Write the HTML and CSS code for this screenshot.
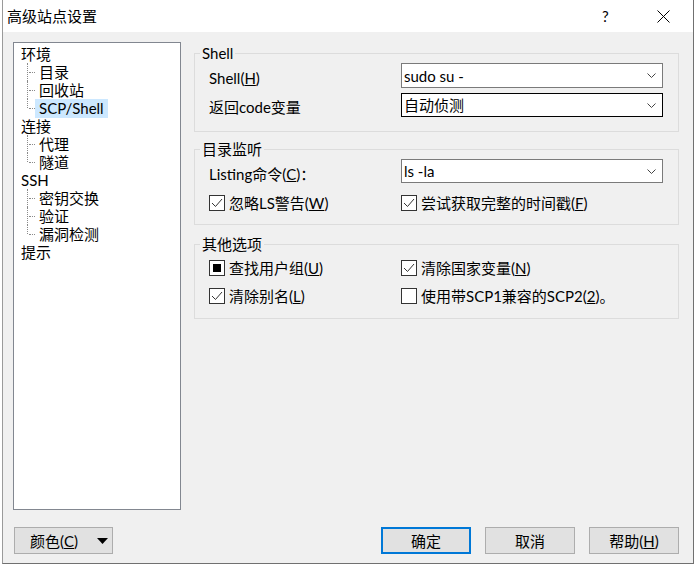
FILE: index.html
```html
<!DOCTYPE html>
<html lang="zh-CN">
<head>
<meta charset="utf-8">
<title>高级站点设置</title>
<link rel="stylesheet" href="styles.css">
</head>
<body>
<div class="window">
  <div class="titlebar">
    <span class="title">高级站点设置</span>
    <span class="help">?</span>
    <span class="close"><svg width="13" height="13" viewBox="0 0 13 13"><path d="M0.5 0.5 L12.5 12.5 M12.5 0.5 L0.5 12.5" stroke="#000" stroke-width="1" fill="none"/></svg></span>
  </div>
  <div class="client">
    <div class="main">
      <ul class="tree">
        <li><span class="label">环境</span>
          <ul class="children">
            <li><span class="label">目录</span></li>
            <li><span class="label">回收站</span></li>
            <li><span class="label selected">SCP/Shell</span></li>
          </ul>
        </li>
        <li><span class="label">连接</span>
          <ul class="children">
            <li><span class="label">代理</span></li>
            <li><span class="label">隧道</span></li>
          </ul>
        </li>
        <li><span class="label">SSH</span>
          <ul class="children">
            <li><span class="label">密钥交换</span></li>
            <li><span class="label">验证</span></li>
            <li><span class="label">漏洞检测</span></li>
          </ul>
        </li>
        <li><span class="label">提示</span></li>
      </ul>
      <div class="panel">
        <fieldset class="group g1">
          <legend>Shell</legend>
          <div class="row r1">
            <span class="lbl">Shell(<u>H</u>)</span>
            <div class="combo"><span class="val">sudo su -</span><svg class="chev" width="9" height="5" viewBox="0 0 9 5"><path d="M0.5 0.5 L4.5 4.5 L8.5 0.5" stroke="#444" fill="none"/></svg></div>
          </div>
          <div class="row r2">
            <span class="lbl">返回code变量</span>
            <div class="combo focus"><span class="val">自动侦测</span><svg class="chev" width="9" height="5" viewBox="0 0 9 5"><path d="M0.5 0.5 L4.5 4.5 L8.5 0.5" stroke="#444" fill="none"/></svg></div>
          </div>
        </fieldset>
        <fieldset class="group g2">
          <legend>目录监听</legend>
          <div class="row r3">
            <span class="lbl">Listing命令(<u>C</u>)：</span>
            <div class="combo"><span class="val">ls -la</span><svg class="chev" width="9" height="5" viewBox="0 0 9 5"><path d="M0.5 0.5 L4.5 4.5 L8.5 0.5" stroke="#444" fill="none"/></svg></div>
          </div>
          <div class="cbrow first">
            <div class="cb"><span class="box"><svg width="14" height="14" viewBox="0 0 14 14"><path d="M2 7 L5.5 10.5 L12 3" stroke="#333" fill="none"/></svg></span><span>忽略LS警告(<u>W</u>)</span></div>
            <div class="cb"><span class="box"><svg width="14" height="14" viewBox="0 0 14 14"><path d="M2 7 L5.5 10.5 L12 3" stroke="#333" fill="none"/></svg></span><span>尝试获取完整的时间戳(<u>F</u>)</span></div>
          </div>
        </fieldset>
        <fieldset class="group g3">
          <legend>其他选项</legend>
          <div class="cbrow first">
            <div class="cb"><span class="box"><span class="indet"></span></span><span>查找用户组(<u>U</u>)</span></div>
            <div class="cb"><span class="box"><svg width="14" height="14" viewBox="0 0 14 14"><path d="M2 7 L5.5 10.5 L12 3" stroke="#333" fill="none"/></svg></span><span>清除国家变量(<u>N</u>)</span></div>
          </div>
          <div class="cbrow second">
            <div class="cb"><span class="box"><svg width="14" height="14" viewBox="0 0 14 14"><path d="M2 7 L5.5 10.5 L12 3" stroke="#333" fill="none"/></svg></span><span>清除别名(<u>L</u>)</span></div>
            <div class="cb"><span class="box"></span><span>使用带SCP1兼容的SCP2(<u>2</u>)。</span></div>
          </div>
        </fieldset>
      </div>
    </div>
    <div class="buttons">
      <button class="btn color"><span>颜色(<u>C</u>)</span><svg width="11" height="6" viewBox="0 0 11 6"><path d="M0 0 L11 0 L5.5 6 Z" fill="#000"/></svg></button>
      <div class="spacer"></div>
      <button class="btn default">确定</button>
      <button class="btn">取消</button>
      <button class="btn">帮助(<u>H</u>)</button>
    </div>
  </div>
</div>
</body>
</html>
```

FILE: styles.css
```css
html, body {
  margin: 0;
  padding: 0;
}
body {
  background: #ffffff;
  width: 696px;
  height: 567px;
  overflow: hidden;
  font-family: Lato, "Noto Sans CJK SC", sans-serif;
  font-size: 15px;
  color: #000;
}
.window {
  margin-left: 2px;
  width: 690px;
  height: 563px;
  border-left: 1px solid #9a9a9a;
  border-right: 1px solid #707070;
  border-bottom: 1px solid #707070;
  background: #f0f0f0;
  display: flex;
  flex-direction: column;
}
.titlebar {
  height: 32px;
  background: #ffffff;
  display: flex;
  align-items: center;
  padding-left: 4px;
  flex: none;
}
.title {
  flex: 1;
  line-height: 18px;
  font-size: 15px;
}
.help {
  width: 12px;
  margin-right: 43px;
  font-size: 15px;
  line-height: 18px;
}
.close {
  width: 13px;
  height: 13px;
  margin-right: 23px;
  display: flex;
}
.client {
  flex: 1;
  display: flex;
  flex-direction: column;
}
.main {
  display: flex;
  align-items: flex-start;
}
.tree {
  list-style: none;
  margin: 10px 0 0 10px;
  padding: 2px 0 0 0;
  width: 166px;
  height: 464px;
  border: 1px solid #828790;
  background: #fff;
  flex: none;
  line-height: 18px;
}
.tree li {
  list-style: none;
  line-height: 18px;
}
.tree .label {
  display: inline-block;
  vertical-align: top;
  height: 18px;
  line-height: 18px;
  padding-left: 7px;
  white-space: nowrap;
}
.children {
  margin: 0;
  padding: 0;
}
.children li {
  position: relative;
  padding-left: 21px;
  height: 18px;
}
.children li::before {
  content: "";
  position: absolute;
  left: 13px;
  top: 0;
  height: 18px;
  border-left: 1px dotted #8a8a8a;
}
.children li:last-child::before {
  height: 9px;
}
.children li::after {
  content: "";
  position: absolute;
  left: 15px;
  top: 9px;
  width: 6px;
  border-top: 1px dotted #8a8a8a;
}
.children .label {
  padding: 0 4px;
}
.children .label.selected {
  background: #cce8ff;
  height: 19px;
}
.panel {
  margin-left: 13px;
  margin-top: 12px;
  width: 485px;
  display: flex;
  flex-direction: column;
}
.group {
  margin: 0;
  border: 1px solid #dcdcdc;
  padding: 1px 0 0 14px;
  min-width: 0;
}
.group legend {
  padding: 0 2px;
  margin-left: -9px;
  line-height: 18px;
  height: 18px;
}
.g1 {
  padding-bottom: 14px;
}
.g2 {
  margin-top: 8px;
  padding-bottom: 12px;
}
.g3 {
  margin-top: 10px;
  padding-top: 6px;
  padding-bottom: 13px;
}
.row {
  display: flex;
  align-items: center;
}
.r2 {
  margin-top: 5px;
}
.lbl {
  width: 192px;
  flex: none;
  line-height: 18px;
  padding-top: 4px;
}
.r3 .lbl {
  padding-top: 5px;
}
.combo {
  width: 262px;
  height: 25px;
  box-sizing: border-box;
  border: 1px solid #7a7a7a;
  background: #fff;
  display: flex;
  align-items: center;
  padding-left: 2px;
}
.combo.focus {
  border-color: #000;
  height: 24px;
}
.r3 .combo {
  height: 24px;
}
.combo .val {
  flex: 1;
  line-height: 18px;
  white-space: nowrap;
}
.chev {
  margin-right: 6px;
}
.cbrow {
  display: flex;
  align-items: center;
  height: 18px;
}
.g2 .cbrow.first {
  margin-top: 11px;
}
.cbrow.second {
  margin-top: 10px;
}
.cb {
  width: 192px;
  display: flex;
  align-items: center;
  white-space: nowrap;
  line-height: 18px;
}
.box {
  width: 16px;
  height: 16px;
  box-sizing: border-box;
  border: 1px solid #333;
  background: #fff;
  margin-right: 4px;
  display: flex;
  align-items: center;
  justify-content: center;
  flex: none;
}
.indet {
  width: 8px;
  height: 8px;
  background: #000;
}
.buttons {
  display: flex;
  align-items: center;
  margin-top: 17px;
  padding-left: 11px;
  padding-right: 14px;
}
.spacer {
  flex: 1;
}
.btn {
  font-family: Lato, "Noto Sans CJK SC", sans-serif;
  font-size: 15px;
  width: 90px;
  height: 27px;
  box-sizing: border-box;
  border: 1px solid #adadad;
  background: #e1e1e1;
  color: #000;
  padding: 0;
  margin: 0 0 0 14px;
  line-height: 18px;
  display: flex;
  align-items: center;
  justify-content: center;
}
.btn.default {
  border: 2px solid #0078d7;
}
.btn.color {
  width: 99px;
  margin-left: 0;
  justify-content: flex-start;
  padding-left: 15px;
}
.btn.color svg {
  margin-left: 19px;
}
```
